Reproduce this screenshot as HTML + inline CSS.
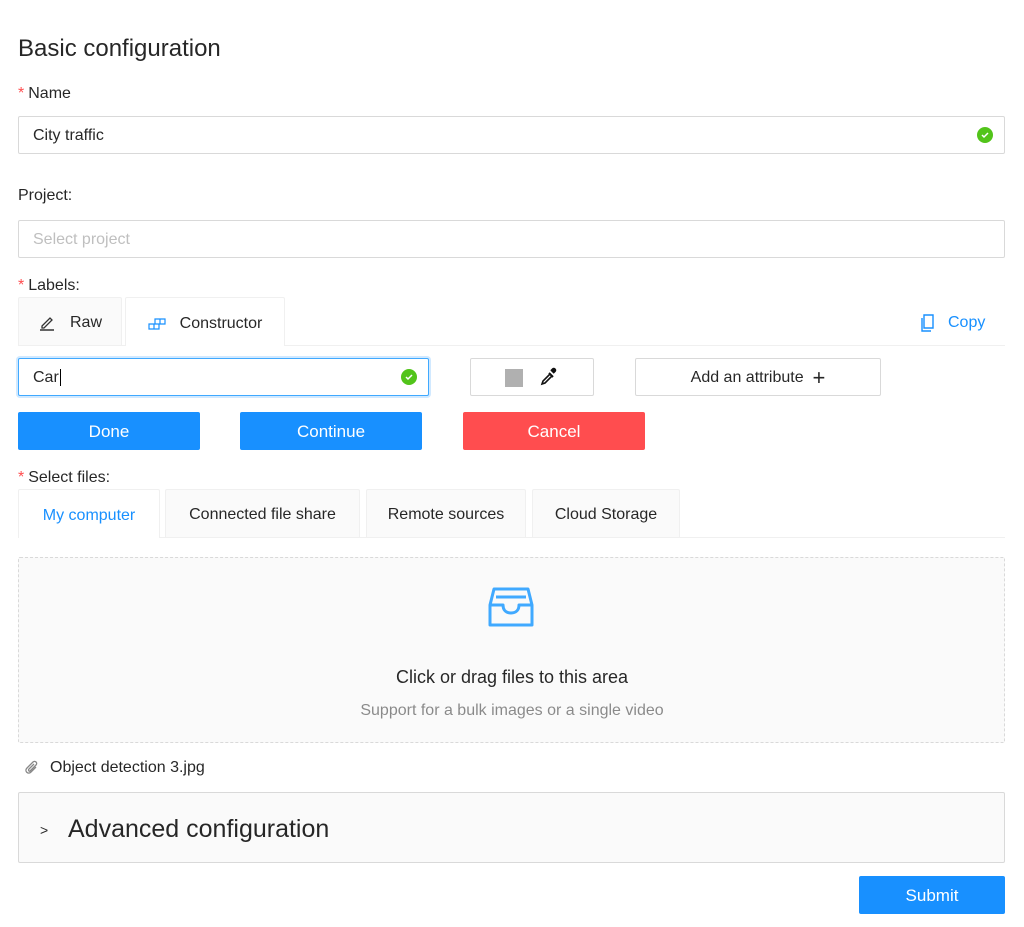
<!DOCTYPE html>
<html><head><style>
*{box-sizing:border-box;margin:0;padding:0}
body{width:1024px;height:927px;background:#fff;font-family:"Liberation Sans",sans-serif;color:rgba(0,0,0,.85);position:relative;overflow:hidden;font-size:16px}
.a{position:absolute}
.req{color:#ff4d4f;margin-right:4px}
.inp{border:1px solid #d9d9d9;border-radius:2px;background:#fff}
.btn{border-radius:2px;color:#fff;display:flex;align-items:center;justify-content:center;font-size:17px;padding-top:2px}
.tab{border:1px solid #f0f0f0;border-bottom:none;background:#fafafa;display:flex;align-items:center;justify-content:center;border-radius:2px 2px 0 0;font-size:16px;padding-top:3px}
.ok{width:16px;height:16px;border-radius:50%;background:#52c41a;display:flex;align-items:center;justify-content:center}
</style></head><body>
<div class="a" style="left:18px;top:35px;font-size:24px;color:rgba(0,0,0,.85)">Basic configuration</div>
<div class="a" style="left:18px;top:85px"><span class="req">*</span>Name</div>
<div class="a inp" style="left:18px;top:116px;width:987px;height:38px"></div>
<div class="a" style="left:33px;top:127px">City traffic</div>
<div class="a ok" style="left:977px;top:127px"><svg width="10" height="10" viewBox="0 0 10 10"><path d="M2 5l2 2 4-4" stroke="#fff" stroke-width="1.5" fill="none"/></svg></div>
<div class="a" style="left:18px;top:187px">Project:</div>
<div class="a inp" style="left:18px;top:220px;width:987px;height:38px"></div>
<div class="a" style="left:33px;top:231px;color:#bfbfbf">Select project</div>
<div class="a" style="left:18px;top:277px"><span class="req">*</span>Labels:</div>
<div class="a" style="left:18px;top:345px;width:987px;height:1px;background:#f0f0f0"></div>
<div class="a tab" style="left:18px;top:297px;width:104px;height:48px"><svg width="18" height="18" viewBox="0 0 18 18" style="margin-right:14px"><path d="M4 12l8-8 2 2-8 8H4z" stroke="#333" fill="none" stroke-width="1.3"/><path d="M2 16h14" stroke="#333" stroke-width="1.5"/></svg>Raw</div>
<div class="a tab" style="left:125px;top:297px;width:160px;height:49px;background:#fff"><svg width="18" height="14" viewBox="0 0 18 14" style="margin-right:14px"><path d="M1 7h5v5H1zM6 7h5v5H6zM7 2h5v5H7zM12 2h5v5h-5z" stroke="#1890ff" fill="none" stroke-width="1.2"/></svg>Constructor</div>
<div class="a" style="left:920px;top:314px;color:#1890ff;display:flex;align-items:center"><svg width="16" height="18" viewBox="0 0 16 18" style="margin-right:12px"><path d="M4 1h9v13H4zM2 4v13h9" stroke="#1890ff" fill="none" stroke-width="1.4"/></svg>Copy</div>
<div class="a inp" style="left:18px;top:358px;width:411px;height:38px;border-color:#40a9ff;box-shadow:0 0 0 2px rgba(24,144,255,.2)"></div>
<div class="a" style="left:33px;top:369px">Car<span style="border-left:1px solid #000;margin-left:1px"></span></div>
<div class="a ok" style="left:401px;top:369px"><svg width="10" height="10" viewBox="0 0 10 10"><path d="M2 5l2 2 4-4" stroke="#fff" stroke-width="1.5" fill="none"/></svg></div>
<div class="a inp" style="left:470px;top:358px;width:124px;height:38px"></div>
<div class="a" style="left:505px;top:369px;width:18px;height:18px;background:#b0b0b0"></div>
<svg class="a" style="left:539px;top:367px" width="20" height="20" viewBox="0 0 20 20"><path d="M3 17l1-3 7-7 2 2-7 7z" stroke="#111" fill="none" stroke-width="1.6"/><path d="M10 6l4 4M12 4l2-2c1-1 3 1 2 2l-2 2" stroke="#111" fill="#111" stroke-width="2"/></svg>
<div class="a inp" style="left:635px;top:358px;width:246px;height:38px;display:flex;align-items:center;justify-content:center;padding-top:2px">Add an attribute&nbsp;&nbsp;<span style="font-size:22px;font-weight:300">+</span></div>
<div class="a btn" style="left:18px;top:412px;width:182px;height:38px;background:#1890ff">Done</div>
<div class="a btn" style="left:240px;top:412px;width:182px;height:38px;background:#1890ff">Continue</div>
<div class="a btn" style="left:463px;top:412px;width:182px;height:38px;background:#ff4d4f">Cancel</div>
<div class="a" style="left:18px;top:469px"><span class="req">*</span>Select files:</div>
<div class="a" style="left:18px;top:537px;width:987px;height:1px;background:#f0f0f0"></div>
<div class="a tab" style="left:18px;top:489px;width:142px;height:49px;background:#fff;color:#1890ff">My computer</div>
<div class="a tab" style="left:165px;top:489px;width:195px;height:48px">Connected file share</div>
<div class="a tab" style="left:366px;top:489px;width:160px;height:48px">Remote sources</div>
<div class="a tab" style="left:532px;top:489px;width:148px;height:48px">Cloud Storage</div>
<div class="a" style="left:18px;top:557px;width:987px;height:186px;background:#fafafa;border:1px dashed #d9d9d9;border-radius:2px"></div>
<svg class="a" style="left:488px;top:585px" width="46" height="44" viewBox="0 0 46 44"><path d="M6 4h34l4 16v20H2V20z M2 20h13c0 5 3 8 8 8s8-3 8-8h13" stroke="#40a9ff" stroke-width="3" fill="none" stroke-linejoin="round"/><path d="M8 12h30" stroke="#40a9ff" stroke-width="3"/></svg>
<div class="a" style="left:0;width:1024px;text-align:center;top:667px;font-size:18px">Click or drag files to this area</div>
<div class="a" style="left:0;width:1024px;text-align:center;top:702px;color:rgba(0,0,0,.45)">Support for a bulk images or a single video</div>
<svg class="a" style="left:24px;top:759px" width="14" height="16" viewBox="0 0 14 16"><path d="M10 5l-5 5c-1 1 0 3 1 2l6-6c2-2-1-5-3-3L3 9c-3 3 1 7 4 4l5-5" stroke="#888" fill="none" stroke-width="1.3"/></svg>
<div class="a" style="left:50px;top:759px">Object detection 3.jpg</div>
<div class="a" style="left:18px;top:792px;width:987px;height:71px;background:#fafafa;border:1px solid #d9d9d9;border-radius:2px"></div>
<div class="a" style="left:40px;top:822px;font-size:14px">&gt;</div>
<div class="a" style="left:68px;top:815px;font-size:25px">Advanced configuration</div>
<div class="a btn" style="left:859px;top:876px;width:146px;height:38px;background:#1890ff">Submit</div>
</body></html>
